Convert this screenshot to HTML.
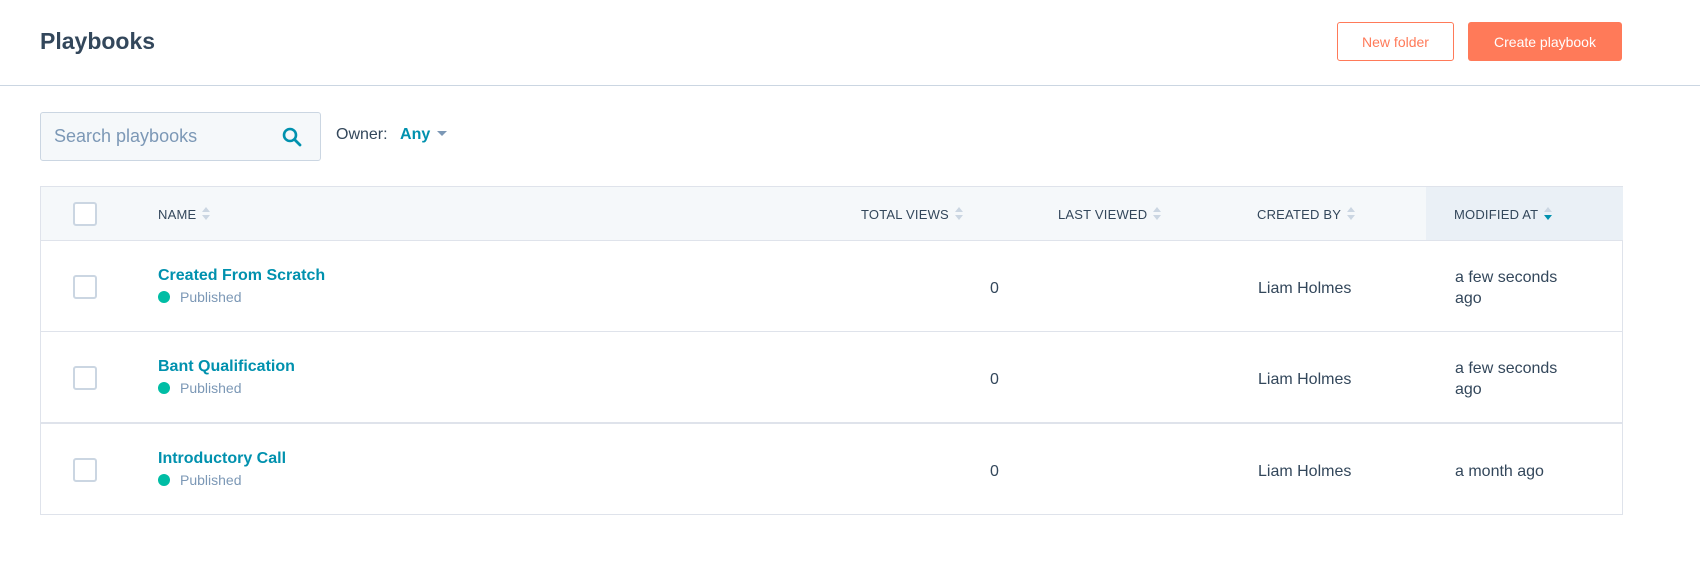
<!DOCTYPE html>
<html><head><meta charset="utf-8"><style>
*{box-sizing:border-box;margin:0;padding:0}
body{width:1700px;height:584px;background:#fff;font-family:"Liberation Sans",sans-serif;color:#33475b;position:relative;overflow:hidden}
.abs{position:absolute}
h1{position:absolute;left:40px;top:28px;font-size:23px;font-weight:bold;color:#33475b}
.hr{position:absolute;left:0;top:85px;width:1700px;height:1px;background:#cbd6e2}
.btn{position:absolute;top:22px;height:39px;border-radius:3px;font-size:14px;display:flex;align-items:center;justify-content:center}
.b1{left:1337px;width:117px;border:1px solid #ff7a59;color:#ff7a59;background:#fff}
.b2{left:1468px;width:154px;background:#ff7a59;color:#fff}
.search{position:absolute;left:40px;top:112px;width:281px;height:49px;border:1px solid #cbd6e2;border-radius:3px;background:#f5f8fa;font-size:18px;color:#7c98b6;padding:13px 13px}
.owner{position:absolute;left:336px;top:126px;font-size:16px;color:#33475b}
.owner b{color:#0091ae;margin-left:8px}
.table{position:absolute;left:40px;top:186px;width:1583px;height:329px;border:1px solid #dfe3eb}
.thead{position:absolute;left:0;top:0;width:100%;height:54px;background:#f5f8fa;border-bottom:1px solid #dfe3eb}
.shade{position:absolute;left:1385px;top:0;width:197px;height:53px;background:#eaf0f6}
.th{position:absolute;top:20px;font-size:13px;color:#33475b;letter-spacing:0.2px}
.sort{display:inline-block;vertical-align:middle;margin-left:6px;width:8px;height:14px;position:relative;top:-2px}
.sort:before{content:"";position:absolute;left:0;top:0;border-left:4px solid transparent;border-right:4px solid transparent;border-bottom:5px solid #cbd6e2}
.sort:after{content:"";position:absolute;left:0;top:8px;border-left:4px solid transparent;border-right:4px solid transparent;border-top:5px solid #cbd6e2}
.sort.act:after{border-top-color:#0091ae}
.cb{position:absolute;left:32px;width:24px;height:24px;border:2px solid #cbd6e2;border-radius:3px;background:#fff}
.row{position:absolute;left:0;width:100%;border-bottom:1px solid #dfe3eb;height:91px}
.name{position:absolute;left:117px;top:26px;font-size:16px;font-weight:bold;color:#0091ae}
.pub{position:absolute;left:117px;top:48px;font-size:14px;color:#7c98b6}
.pub i{display:inline-block;width:12px;height:12px;border-radius:50%;background:#00bda5;margin-right:10px;vertical-align:-1px}
.cell{position:absolute;font-size:16px;color:#33475b;line-height:21px}
</style></head><body>
<h1>Playbooks</h1>
<div class="btn b1">New folder</div>
<div class="btn b2">Create playbook</div>
<div class="hr"></div>
<div class="search">Search playbooks
<svg class="abs" style="left:241px;top:14px" width="20" height="20" viewBox="0 0 20 20"><circle cx="8" cy="8" r="6" fill="none" stroke="#0091ae" stroke-width="2.6"/><path d="M12.5 12.5L18 18" stroke="#0091ae" stroke-width="2.8" stroke-linecap="round"/></svg></div>
<div class="owner">Owner: <b>Any</b><span style="display:inline-block;margin-left:7px;border-left:5px solid transparent;border-right:5px solid transparent;border-top:5px solid #7c98b6;vertical-align:3px"></span></div>
<div class="table">
<div class="thead"><div class="shade"></div>
<div class="cb" style="top:15px"></div>
<div class="th" style="left:117px">NAME<span class="sort"></span></div>
<div class="th" style="left:820px">TOTAL VIEWS<span class="sort"></span></div>
<div class="th" style="left:1017px">LAST VIEWED<span class="sort"></span></div>
<div class="th" style="left:1216px">CREATED BY<span class="sort"></span></div>
<div class="th" style="left:1413px">MODIFIED AT<span class="sort act"></span></div>
</div>
<div class="row" style="top:54px"><div class="cb" style="top:34px"></div><div class="name">Created From Scratch</div><div class="pub"><i></i>Published</div><div class="cell" style="left:949px;top:37px">0</div><div class="cell" style="left:1217px;top:37px">Liam Holmes</div><div class="cell" style="left:1414px;top:26px">a few seconds<br>ago</div></div>
<div class="row" style="top:145px"><div class="cb" style="top:34px"></div><div class="name">Bant Qualification</div><div class="pub"><i></i>Published</div><div class="cell" style="left:949px;top:37px">0</div><div class="cell" style="left:1217px;top:37px">Liam Holmes</div><div class="cell" style="left:1414px;top:26px">a few seconds<br>ago</div></div>
<div class="row" style="top:236px;border-bottom:none;border-top:1px solid #dfe3eb"><div class="cb" style="top:34px"></div><div class="name">Introductory Call</div><div class="pub"><i></i>Published</div><div class="cell" style="left:949px;top:37px">0</div><div class="cell" style="left:1217px;top:37px">Liam Holmes</div><div class="cell" style="left:1414px;top:37px">a month ago</div></div>
</div>
</body></html>
